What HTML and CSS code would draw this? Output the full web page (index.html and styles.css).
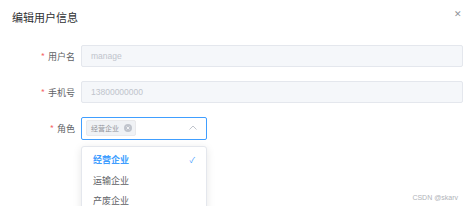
FILE: index.html
```html
<!DOCTYPE html>
<html lang="zh">
<head>
  <meta charset="utf-8">
  <title>编辑用户信息</title>
  <link rel="stylesheet" href="styles.css">
</head>
<body>
  <div class="dialog">
    <div class="dialog-header">
      <span class="dialog-title">编辑用户信息</span>
      <span class="dialog-close">&#x2715;</span>
    </div>
    <div class="dialog-body">
      <div class="form-row">
        <label class="form-label"><span class="req">*</span>用户名</label>
        <div class="input is-disabled">manage</div>
      </div>
      <div class="form-row">
        <label class="form-label"><span class="req">*</span>手机号</label>
        <div class="input is-disabled">13800000000</div>
      </div>
      <div class="form-row">
        <label class="form-label"><span class="req">*</span>角色</label>
        <div class="select-wrap">
          <div class="select is-focus">
            <span class="tag">经营企业<svg class="tag-close" width="8" height="8" viewBox="0 0 8 8"><circle cx="4" cy="4" r="4" fill="#c0c4cc"/><path d="M2.6 2.6 L5.4 5.4 M5.4 2.6 L2.6 5.4" stroke="#ffffff" stroke-width="0.8"/></svg></span>
            <svg class="arrow" width="8" height="5" viewBox="0 0 8 5"><path d="M0.5 4.5 L4 1 L7.5 4.5" fill="none" stroke="#c0c4cc" stroke-width="1"/></svg>
          </div>
          <div class="dropdown">
            <div class="option selected">经营企业<span class="check">&#x2713;</span></div>
            <div class="option">运输企业</div>
            <div class="option">产废企业</div>
          </div>
        </div>
      </div>
    </div>
    <div class="watermark">CSDN @skarv</div>
  </div>
</body>
</html>
```

FILE: styles.css
```css
body {
  margin: 0;
  background: #ffffff;
  font-family: "Noto Sans CJK SC", "Liberation Sans", sans-serif;
  color: #606266;
  width: 474px;
  height: 206px;
  overflow: hidden;
}

.dialog {
  position: relative;
  height: 206px;
}

.dialog-header {
  display: flex;
  justify-content: space-between;
  align-items: center;
  padding: 9px 12px 0 12px;
  height: 16px;
}

.dialog-title {
  font-size: 11px;
  color: #303133;
  line-height: 16px;
}

.dialog-close {
  font-size: 9px;
  color: #909399;
  margin-top: -8px;
}

.dialog-body {
  display: flex;
  flex-direction: column;
  gap: 14px;
  padding-top: 20px;
}

.form-row {
  display: flex;
  align-items: center;
  height: 22px;
}

.form-label {
  width: 81px;
  padding-right: 6px;
  box-sizing: border-box;
  text-align: right;
  font-size: 9px;
  color: #606266;
}

.req {
  color: #f56c6c;
  margin-right: 3px;
}

.input {
  width: 382px;
  height: 22px;
  box-sizing: border-box;
  border: 1px solid #e4e7ed;
  border-radius: 2px;
  padding-left: 9px;
  font-family: "Liberation Sans", sans-serif;
  font-size: 8.5px;
  line-height: 20px;
}

.input.is-disabled {
  background: #f5f7fa;
  color: #c0c4cc;
}

.select-wrap {
  position: relative;
}

.select {
  width: 126px;
  height: 23px;
  box-sizing: border-box;
  border: 1px solid #e4e7ed;
  border-radius: 2px;
  display: flex;
  align-items: center;
  padding: 0 9px 0 4px;
  justify-content: space-between;
}

.select.is-focus {
  border-color: #409eff;
}

.tag {
  display: inline-flex;
  align-items: center;
  height: 14px;
  background: #f0f2f5;
  border: 1px solid #e9e9eb;
  border-radius: 2px;
  padding: 0 3px 0 4px;
  font-size: 7px;
  color: #909399;
}

.tag-close {
  margin-left: 5px;
}

.arrow {
  margin-top: -1px;
}

.dropdown {
  position: absolute;
  left: 0;
  top: 29px;
  width: 126px;
  box-sizing: border-box;
  background: #ffffff;
  border: 1px solid #e4e7ed;
  border-radius: 3px;
  box-shadow: 0 2px 8px rgba(0, 0, 0, 0.1);
  padding-top: 3px;
  height: 70px;
  overflow: hidden;
}

.option {
  display: flex;
  justify-content: space-between;
  align-items: center;
  height: 20.5px;
  padding: 0 11px 0 11px;
  font-size: 9px;
  color: #606266;
}

.option.selected {
  color: #409eff;
  font-weight: bold;
}

.check {
  font-size: 8px;
  font-weight: normal;
}

.watermark {
  position: absolute;
  right: 16px;
  bottom: 5px;
  font-family: "Liberation Sans", sans-serif;
  font-size: 7px;
  color: #b0b3b8;
}
```
